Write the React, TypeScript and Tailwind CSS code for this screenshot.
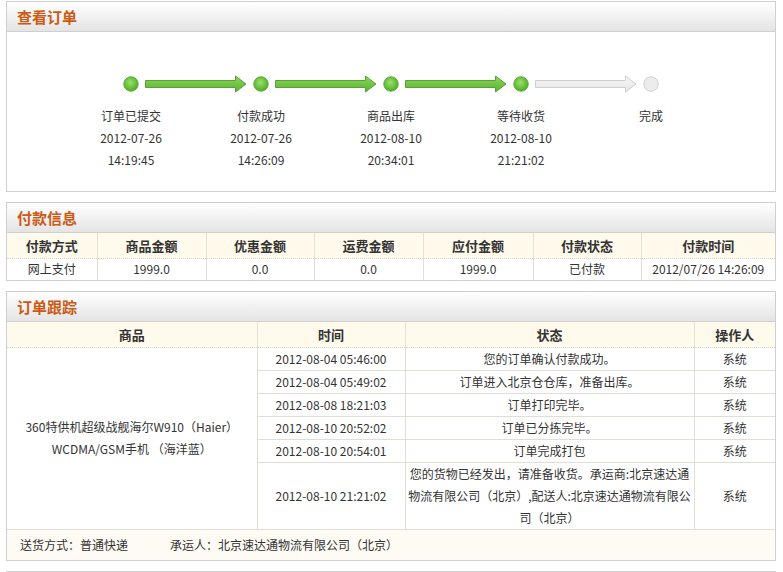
import React from "react";

const font = { fontFamily: '"Noto Sans CJK SC", "Liberation Sans", sans-serif' };

function PanelHeader({ title }: { title: string }) {
  return (
    <div className="h-[30px] border-b border-[#cfcfcf] bg-gradient-to-b from-white to-[#e4e4e4] flex items-center pl-[10px]">
      <span className="text-[15px] font-bold text-[#cc5a14] leading-none">{title}</span>
    </div>
  );
}

function Dot({ on }: { on: boolean }) {
  return (
    <svg width="16" height="16" viewBox="0 0 16 16" className="shrink-0">
      <defs>
        <radialGradient id="gdot" cx="45%" cy="40%" r="60%">
          <stop offset="0%" stopColor="#9be06a" />
          <stop offset="100%" stopColor="#4cae22" />
        </radialGradient>
      </defs>
      {on ? (
        <circle cx="8" cy="8" r="7.2" fill="url(#gdot)" stroke="#5aa636" strokeWidth="1" />
      ) : (
        <circle cx="8" cy="8" r="7.2" fill="#ececec" stroke="#cfcfcf" strokeWidth="1" />
      )}
    </svg>
  );
}

function Arrow({ on }: { on: boolean }) {
  return (
    <svg width="102" height="18" viewBox="0 0 102 18" className="shrink-0">
      <defs>
        <linearGradient id="garr" x1="0" y1="0" x2="0" y2="1">
          <stop offset="0%" stopColor="#8fd65c" />
          <stop offset="100%" stopColor="#55b52c" />
        </linearGradient>
        <linearGradient id="garr2" x1="0" y1="0" x2="0" y2="1">
          <stop offset="0%" stopColor="#f6f6f6" />
          <stop offset="100%" stopColor="#e6e6e6" />
        </linearGradient>
      </defs>
      <path
        d="M0.5 5.5 H90.5 V1 L101 9 L90.5 17 V12.5 H0.5 Z"
        fill={on ? "url(#garr)" : "url(#garr2)"}
        stroke={on ? "#5b9e3a" : "#cfcfcf"}
        strokeWidth="1"
      />
    </svg>
  );
}

const steps = [
  { name: "订单已提交", date: "2012-07-26", time: "14:19:45" },
  { name: "付款成功", date: "2012-07-26", time: "14:26:09" },
  { name: "商品出库", date: "2012-08-10", time: "20:34:01" },
  { name: "等待收货", date: "2012-08-10", time: "21:21:02" },
  { name: "完成", date: "", time: "" },
];

const track = [
  ["2012-08-04 05:46:00", "您的订单确认付款成功。"],
  ["2012-08-04 05:49:02", "订单进入北京仓仓库，准备出库。"],
  ["2012-08-08 18:21:03", "订单打印完毕。"],
  ["2012-08-10 20:52:02", "订单已分拣完毕。"],
  ["2012-08-10 20:54:01", "订单完成打包"],
];

export default function App() {
  const th = "h-[25px] text-[13px] font-bold text-[#333] text-center border-r border-[#e6e1d4] border-b border-b-[#d8d2c2] bg-[#fffaeb] p-0";
  const td = "text-[12px] text-[#333] text-center border-r border-b border-[#e2ded6] p-0";
  return (
    <div className="w-[783px] h-[572px] bg-white overflow-hidden" style={font}>
      <div className="ml-[6px] w-[770px] pt-[1px] flex flex-col gap-[10px]">
        {/* Panel 1 */}
        <div className="border border-[#cfcfcf] h-[191px]">
          <PanelHeader title="查看订单" />
          <div className="w-[650px] mx-auto pt-[43px]">
            <div className="flex items-center pl-[57px]">
              {steps.map((s, i) => (
                <React.Fragment key={i}>
                  <Dot on={i < 4} />
                  {i < 4 && (
                    <div className="pl-[6px] pr-[6px] flex">
                      <Arrow on={i < 3} />
                    </div>
                  )}
                </React.Fragment>
              ))}
            </div>
            <div className="grid grid-cols-5 mt-[12px] text-[#333]">
              {steps.map((s, i) => (
                <div key={i} className="flex flex-col items-center">
                  <div className="text-[12px] leading-[22px]">{s.name}</div>
                  <div className="text-[12px] leading-[22px]">{s.date}</div>
                  <div className="text-[12px] leading-[22px]">{s.time}</div>
                </div>
              ))}
            </div>
          </div>
        </div>

        {/* Panel 2 */}
        <div className="border border-[#cfcfcf]">
          <PanelHeader title="付款信息" />
          <table className="w-full border-collapse table-fixed">
            <colgroup>
              <col className="w-[90px]" />
              <col className="w-[109px]" />
              <col className="w-[108px]" />
              <col className="w-[109px]" />
              <col className="w-[110px]" />
              <col className="w-[108px]" />
              <col />
            </colgroup>
            <thead>
              <tr>
                {["付款方式", "商品金额", "优惠金额", "运费金额", "应付金额", "付款状态", "付款时间"].map((h, i) => (
                  <th key={i} className={th + (i === 6 ? " border-r-0" : "")} style={{ borderBottomStyle: "dotted" }}>
                    {h}
                  </th>
                ))}
              </tr>
            </thead>
            <tbody>
              <tr className="h-[22px]">
                {["网上支付", "1999.0", "0.0", "0.0", "1999.0", "已付款", "2012/07/26 14:26:09"].map((c, i) => (
                  <td key={i} className={td + " border-b-0" + (i === 6 ? " border-r-0" : "")}>
                    {c}
                  </td>
                ))}
              </tr>
            </tbody>
          </table>
        </div>

        {/* Panel 3 */}
        <div className="border border-[#cfcfcf]">
          <PanelHeader title="订单跟踪" />
          <table className="w-full border-collapse table-fixed">
            <colgroup>
              <col className="w-[250px]" />
              <col className="w-[148px]" />
              <col className="w-[289px]" />
              <col />
            </colgroup>
            <thead>
              <tr>
                {["商品", "时间", "状态", "操作人"].map((h, i) => (
                  <th key={i} className={th + (i === 3 ? " border-r-0" : "")} style={{ borderBottomStyle: "dotted" }}>
                    {h}
                  </th>
                ))}
              </tr>
            </thead>
            <tbody>
              {track.map((r, i) => (
                <tr key={i} className="h-[23px]">
                  {i === 0 && (
                    <td rowSpan={6} className={td + " leading-[22px]"}>
                      360特供机超级战舰海尔W910（Haier）
                      <br />
                      WCDMA/GSM手机 （海洋蓝）
                    </td>
                  )}
                  <td className={td}>{r[0]}</td>
                  <td className={td}>{r[1]}</td>
                  <td className={td + " border-r-0"}>系统</td>
                </tr>
              ))}
              <tr className="h-[67px]">
                <td className={td}>2012-08-10 21:21:02</td>
                <td className={td + " leading-[22px] whitespace-nowrap"}>
                  您的货物已经发出，请准备收货。承运商:北京速达通
                  <br />
                  物流有限公司（北京）,配送人:北京速达通物流有限公
                  <br />
                  司（北京）
                </td>
                <td className={td + " border-r-0"}>系统</td>
              </tr>
            </tbody>
          </table>
          <div className="h-[30px] bg-[#fdfbf4] flex items-center text-[12px] text-[#333] pl-[13px]">
            <span className="w-[150px]">送货方式：普通快递</span>
            <span>承运人：北京速达通物流有限公司（北京）</span>
          </div>
        </div>

        <div className="border border-[#cfcfcf] h-[40px]" />
      </div>
    </div>
  );
}
